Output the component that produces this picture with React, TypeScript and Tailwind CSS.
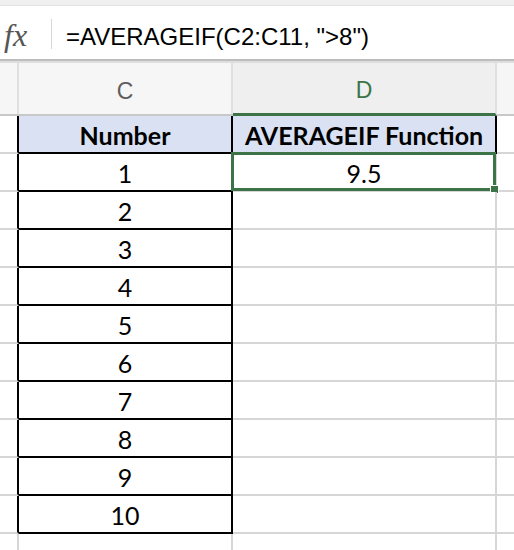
import React from "react";

const rows = ["1", "2", "3", "4", "5", "6", "7", "8", "9", "10"];

const cellFont = { fontFamily: "Lato, 'Open Sans', sans-serif" };

function GridRow({ c, d, header = false, selected = false }: { c: string; d?: string; header?: boolean; selected?: boolean }) {
  return (
    <div className="flex h-[38px]">
      <div className="w-[19px] shrink-0 border-b-2 border-r-2 border-b-[#d6d6d6] border-r-black" />
      <div
        className={`w-[214px] shrink-0 flex items-center justify-center pt-[3px] border-b-2 border-r-2 border-black text-[25px] text-black ${header ? "bg-[#d9e1f2] font-bold" : "bg-white"}`}
        style={cellFont}
      >
        {c}
      </div>
      <div
        className={`relative w-[264px] shrink-0 flex items-center justify-center pt-[3px] border-b-2 border-r-2 text-[25px] text-black ${header ? "bg-[#d9e1f2] font-bold border-black" : "bg-white border-[#d6d6d6]"}`}
        style={cellFont}
      >
        {d}
        {selected && (
          <div className="absolute -left-[2px] -top-[2px] -right-[1px] -bottom-[1px] border-[3px] border-[#3c7448]">
            <div className="absolute -right-[6px] -bottom-[6px] w-[9px] h-[9px] bg-[#3c7448] border border-white" />
          </div>
        )}
      </div>
      <div className="flex-1 border-b-2 border-b-[#d6d6d6]" />
    </div>
  );
}

export default function App() {
  return (
    <div className="w-[514px] h-[550px] overflow-hidden bg-white">
      {/* top strip */}
      <div className="h-[6px] bg-[#f0f0f0] border-b border-[#e2e2e2]" />

      {/* formula bar */}
      <div className="h-[53px] flex items-center bg-white pt-[8px]">
        <span
          className="w-[51px] pl-[4px] -mt-[4px] text-[32px] italic text-[#555555] leading-none"
          style={{ fontFamily: "'Liberation Serif', 'DejaVu Serif', serif" }}
        >
          fx
        </span>
        <div className="w-px h-[30px] -mt-[6px] bg-[#d8d8d8]" />
        <div
          className="ml-[14px] text-[24px] text-black leading-none"
          style={{ fontFamily: "'Liberation Sans', Arial, sans-serif" }}
        >
          =AVERAGEIF(C2:C11, "&gt;8")
        </div>
      </div>

      {/* separator */}
      <div className="h-[2px] bg-[#bdbdbd]" />
      <div className="h-[2px] bg-[#dedede]" />

      {/* column headers */}
      <div className="flex h-[53px] bg-[#f6f6f6] border-b-2 border-[#c8c8c8]" style={{ fontFamily: "'Liberation Sans', Arial, sans-serif" }}>
        <div className="w-[19px] shrink-0 border-r-2 border-[#e0e0e0]" />
        <div className="w-[214px] shrink-0 flex items-center justify-center pt-[5px] border-r-2 border-[#e0e0e0] text-[23px] text-[#5f5f5f]">
          C
        </div>
        <div className="w-[264px] shrink-0 flex items-center justify-center pt-[5px] text-[23px] text-[#3c7448] bg-[#efefef] border-r-2 border-[#e0e0e0] border-b-[3px] border-b-[#3c7448] -mb-[2px]">
          D
        </div>
        <div className="flex-1" />
      </div>

      {/* grid */}
      <div className="flex flex-col">
        <GridRow c="Number" d="AVERAGEIF Function" header />
        {rows.map((r, i) => (
          <GridRow key={r} c={r} d={i === 0 ? "9.5" : ""} selected={i === 0} />
        ))}
        <div className="flex h-[20px]">
          <div className="w-[19px] shrink-0 border-r-2 border-[#d6d6d6]" />
          <div className="w-[214px] shrink-0 border-r-2 border-[#d6d6d6]" />
          <div className="w-[264px] shrink-0 border-r-2 border-[#d6d6d6]" />
          <div className="flex-1" />
        </div>
      </div>
    </div>
  );
}
